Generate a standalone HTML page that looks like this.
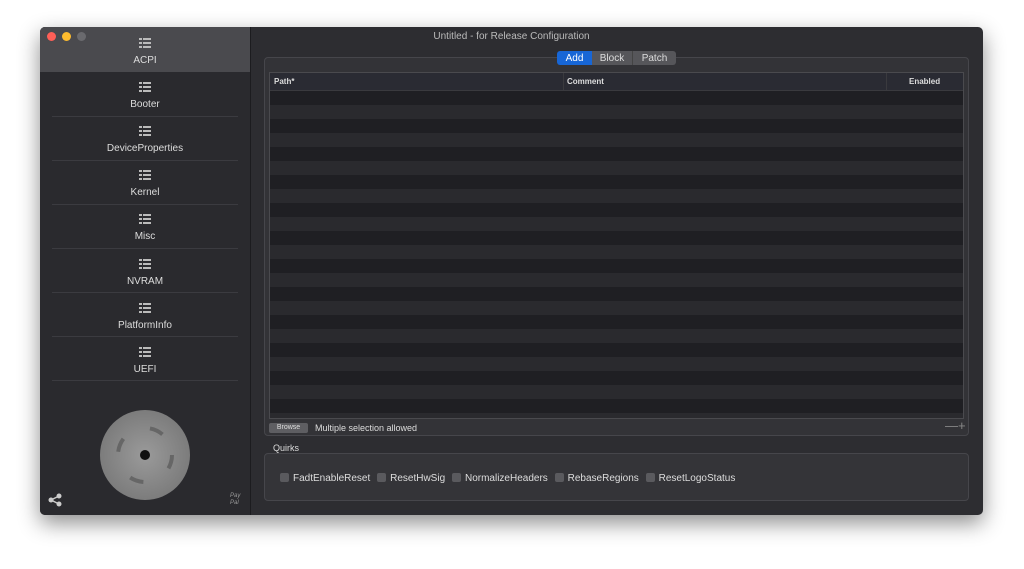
<!DOCTYPE html><html><head><style>
body{margin:0;width:1024px;height:569px;background:#fff;font-family:"Liberation Sans",sans-serif;position:relative;overflow:hidden}
.win{position:absolute;left:40px;top:27px;width:943px;height:488px;background:#2d2d31;border-radius:5px;box-shadow:0 8px 22px rgba(0,0,0,.45);overflow:hidden}
.side{position:absolute;left:0;top:0;width:210px;height:488px;background:#2a2a2e;border-right:1px solid #1c1c1f}
.item{position:absolute;left:0;width:210px;height:44px}
.dot{position:absolute;top:5px;width:9px;height:9px;border-radius:50%}
.t{position:absolute;color:#ddd;font-size:10px}
.grp{position:absolute;border:1px solid #46464b;border-radius:4px;background:#343438}
.cb{display:inline-block;width:9px;height:9px;background:#5a5a5e;border-radius:2px;vertical-align:-1px;margin-right:4px}
.nav{position:absolute;left:40px;width:210px;color:#ddd;font-size:10px;text-align:center}
</style></head><body>
<div class="win">
<div class="side">
<div class="item" style="top:0;height:45px;background:#4a4a4e"></div>
<div class="dot" style="left:7px;background:#fe5f57"></div>
<div class="dot" style="left:22px;background:#febc2e"></div>
<div class="dot" style="left:37px;background:#6a6a6e"></div>
</div>
<div class="t" style="left:0;width:943px;text-align:center;top:4px;color:#bbb">Untitled - for Release Configuration</div>

<div class="grp" style="left:224px;top:30px;width:703px;height:377px;background:#333337"></div>
<div style="position:absolute;left:517px;top:24px;height:14px;display:flex;font-size:10px;color:#ddd;border-radius:3px;overflow:hidden">
<div style="background:#1766d6;width:35px;text-align:center;line-height:15px;color:#fff">Add</div>
<div style="background:#56565a;width:40px;text-align:center;line-height:15px;border-right:1px solid #444">Block</div>
<div style="background:#56565a;width:43px;text-align:center;line-height:15px">Patch</div></div>
<div style="position:absolute;left:229px;top:45px;width:693px;height:345px;border:1px solid #4a4a4e;background:repeating-linear-gradient(#1f1f23 0 14px,#2a2a2e 14px 28px) 0 18px / 100% 100% no-repeat, #26262a">
<div style="height:17px;background:#2a2b33;border-bottom:1px solid #3a3a3e;position:relative;font-size:8px;color:#ddd;font-weight:bold">
<span style="position:absolute;left:4px;top:4px">Path*</span>
<span style="position:absolute;left:293px;top:0;height:17px;border-left:1px solid #3a3a3e"></span>
<span style="position:absolute;left:297px;top:4px">Comment</span>
<span style="position:absolute;left:616px;top:0;height:17px;border-left:1px solid #3a3a3e"></span>
<span style="position:absolute;left:639px;top:4px">Enabled</span></div></div>
<div style="position:absolute;left:229px;top:396px;width:39px;height:10px;background:#5e5e62;border-radius:2px;font-size:7px;color:#ddd;text-align:center;line-height:10px">Browse</div>
<div class="t" style="left:275px;top:396px;font-size:9px">Multiple selection allowed</div>
<div class="t" style="left:905px;top:391px;color:#888;font-size:13px">—+</div>
<div class="t" style="left:233px;top:416px;font-size:9px">Quirks</div>
<div class="grp" style="left:224px;top:426px;width:703px;height:46px"></div>
<div class="t" style="left:240px;top:446px;font-size:10px;word-spacing:-0.5px"><span class="cb"></span>FadtEnableReset &nbsp; <span class="cb"></span>ResetHwSig &nbsp; <span class="cb"></span>NormalizeHeaders &nbsp; <span class="cb"></span>RebaseRegions &nbsp; <span class="cb"></span>ResetLogoStatus</div>

<svg style="position:absolute;left:60px;top:382px" width="90" height="92"><defs><radialGradient id="g"><stop offset="0" stop-color="#9a9a9a"/><stop offset="1" stop-color="#7c7c7c"/></radialGradient></defs>
<circle cx="45" cy="46" r="45" fill="url(#g)"/><circle cx="45" cy="46" r="27" fill="none" stroke="#666" stroke-width="4" stroke-dasharray="14 30"/><circle cx="45" cy="46" r="5" fill="#111"/></svg>
<svg style="position:absolute;left:8px;top:466px" width="14" height="14"><circle cx="3" cy="7" r="2.5" fill="#ccc"/><circle cx="11" cy="3" r="2.5" fill="#ccc"/><circle cx="11" cy="11" r="2.5" fill="#ccc"/><path d="M3 7L11 3M3 7L11 11" stroke="#ccc" stroke-width="1.5"/></svg>
<div class="t" style="left:190px;top:466px;font-size:6px;font-style:italic;color:#999;line-height:7px">Pay<br>Pal</div>
</div>
<div class="nav" style="top:55px">ACPI</div>
<div class="nav" style="top:99px">Booter</div>
<div class="nav" style="top:143px">DeviceProperties</div>
<div class="nav" style="top:187px">Kernel</div>
<div class="nav" style="top:231px">Misc</div>
<div class="nav" style="top:276px">NVRAM</div>
<div class="nav" style="top:320px">PlatformInfo</div>
<div class="nav" style="top:364px">UEFI</div>
<svg style="position:absolute;left:0;top:0" width="1024" height="569">
<defs><g id="ic"><rect x="0" y="0" width="3" height="2"/><rect x="4" y="0" width="8" height="2"/><rect x="0" y="4" width="3" height="2"/><rect x="4" y="4" width="8" height="2"/><rect x="0" y="8" width="3" height="2"/><rect x="4" y="8" width="8" height="2"/></g></defs>
<g fill="#bbb">
<use href="#ic" x="139" y="38"/><use href="#ic" x="139" y="82"/><use href="#ic" x="139" y="126"/><use href="#ic" x="139" y="170"/><use href="#ic" x="139" y="214"/><use href="#ic" x="139" y="259"/><use href="#ic" x="139" y="303"/><use href="#ic" x="139" y="347"/>
</g>
<g fill="#3b3b40"><rect x="52" y="116" width="186" height="1"/><rect x="52" y="160" width="186" height="1"/><rect x="52" y="204" width="186" height="1"/><rect x="52" y="248" width="186" height="1"/><rect x="52" y="292" width="186" height="1"/><rect x="52" y="336" width="186" height="1"/><rect x="52" y="380" width="186" height="1"/></g>
</svg>
</body></html>
